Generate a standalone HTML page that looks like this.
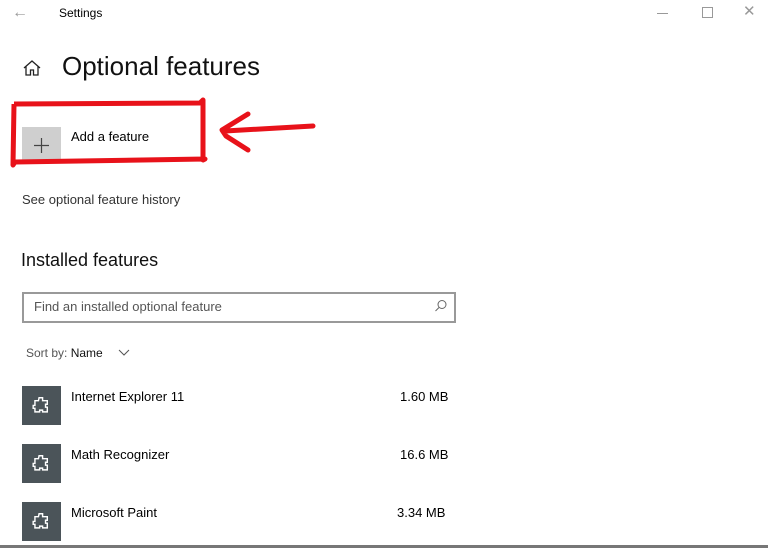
<!DOCTYPE html>
<html><head><style>
body{margin:0;width:768px;height:548px;background:#fff;font-family:"Liberation Sans",sans-serif;color:#000;position:relative;overflow:hidden}
.a{position:absolute;white-space:nowrap}
.ic{position:absolute;left:22px;width:39px;height:39px;background:#4b5459}
.ic svg{position:absolute;left:10px;top:10px}
</style></head><body>
<div class="a" style="left:12px;top:4px;font-size:16px;color:#999">&#8592;</div>
<div class="a" style="left:59px;top:6px;font-size:12px">Settings</div>
<div class="a" style="left:657px;top:13px;width:11px;height:1px;background:#999"></div>
<div class="a" style="left:702px;top:7px;width:9px;height:9px;border:1px solid #999"></div>
<div class="a" style="left:743px;top:2px;font-size:15px;color:#999">&#10005;</div>
<svg class="a" style="left:22px;top:58px" width="20" height="20" viewBox="0 0 20 20"><path d="M2 10 L10 3 L18 10 M4 8.5 V17 H8.5 V12 H11.5 V17 H16 V8.5" fill="none" stroke="#222" stroke-width="1.3"/></svg>
<div class="a" style="left:62px;top:51px;font-size:26px;color:#111">Optional features</div>
<div class="a" style="left:22px;top:127px;width:39px;height:36px;background:#cfcfcf"></div>
<svg class="a" style="left:22px;top:127px" width="39" height="36"><path d="M19.5 11 V26 M12 18.5 H27" stroke="#444" stroke-width="1.2"/></svg>
<div class="a" style="left:71px;top:129px;font-size:13px">Add a feature</div>
<svg class="a" style="left:0;top:90px" width="330" height="90"><path d="M14 14 L200 13 L203 10 L203 70 L205 69 L15 72 L13 75 L14 14" fill="none" stroke="#e8121a" stroke-width="5" stroke-linejoin="round"/><path d="M313 36 L225 41 M248 24 L222 40 L226 46 L248 60" fill="none" stroke="#e8121a" stroke-width="5" stroke-linecap="round" stroke-linejoin="round"/></svg>
<div class="a" style="left:22px;top:192px;font-size:13px;color:#333">See optional feature history</div>
<div class="a" style="left:21px;top:250px;font-size:18px;color:#111">Installed features</div>
<div class="a" style="left:22px;top:292px;width:430px;height:27px;border:2px solid #999"></div>
<div class="a" style="left:34px;top:299px;font-size:13px;color:#555">Find an installed optional feature</div>
<svg class="a" style="left:434px;top:299px" width="14" height="14"><circle cx="8" cy="5.5" r="4" fill="none" stroke="#666" stroke-width="1"/><path d="M5 8.5 L1.5 12" stroke="#666"/></svg>
<div class="a" style="left:26px;top:346px;font-size:12px;color:#555">Sort by: <span style="color:#111">Name</span></div>
<svg class="a" style="left:118px;top:349px" width="12" height="8"><path d="M1 1 L6 6 L11 1" fill="none" stroke="#555"/></svg>
<div class="ic" style="top:386px"><svg width="20" height="20" viewBox="0 0 17 17"><path d="M6 1.5 h3 v2.5 h4 v3 h-1.5 v2.5 h1.5 v4 h-4 v-1.5 h-2.5 v1.5 h-4 v-3 h-1.5 v-2.5 h1.5 v-4 h3 z" fill="none" stroke="#fff" stroke-width="1.2"/></svg></div>
<div class="ic" style="top:444px"><svg width="20" height="20" viewBox="0 0 17 17"><path d="M6 1.5 h3 v2.5 h4 v3 h-1.5 v2.5 h1.5 v4 h-4 v-1.5 h-2.5 v1.5 h-4 v-3 h-1.5 v-2.5 h1.5 v-4 h3 z" fill="none" stroke="#fff" stroke-width="1.2"/></svg></div>
<div class="ic" style="top:502px"><svg width="20" height="20" viewBox="0 0 17 17"><path d="M6 1.5 h3 v2.5 h4 v3 h-1.5 v2.5 h1.5 v4 h-4 v-1.5 h-2.5 v1.5 h-4 v-3 h-1.5 v-2.5 h1.5 v-4 h3 z" fill="none" stroke="#fff" stroke-width="1.2"/></svg></div>
<div class="a" style="left:71px;top:389px;font-size:13px">Internet Explorer 11</div>
<div class="a" style="left:71px;top:447px;font-size:13px">Math Recognizer</div>
<div class="a" style="left:71px;top:505px;font-size:13px">Microsoft Paint</div>
<div class="a" style="left:400px;top:389px;font-size:13px">1.60 MB</div>
<div class="a" style="left:400px;top:447px;font-size:13px">16.6 MB</div>
<div class="a" style="left:397px;top:505px;font-size:13px">3.34 MB</div>
<div class="a" style="left:0;top:545px;width:768px;height:3px;background:#777"></div>
</body></html>
